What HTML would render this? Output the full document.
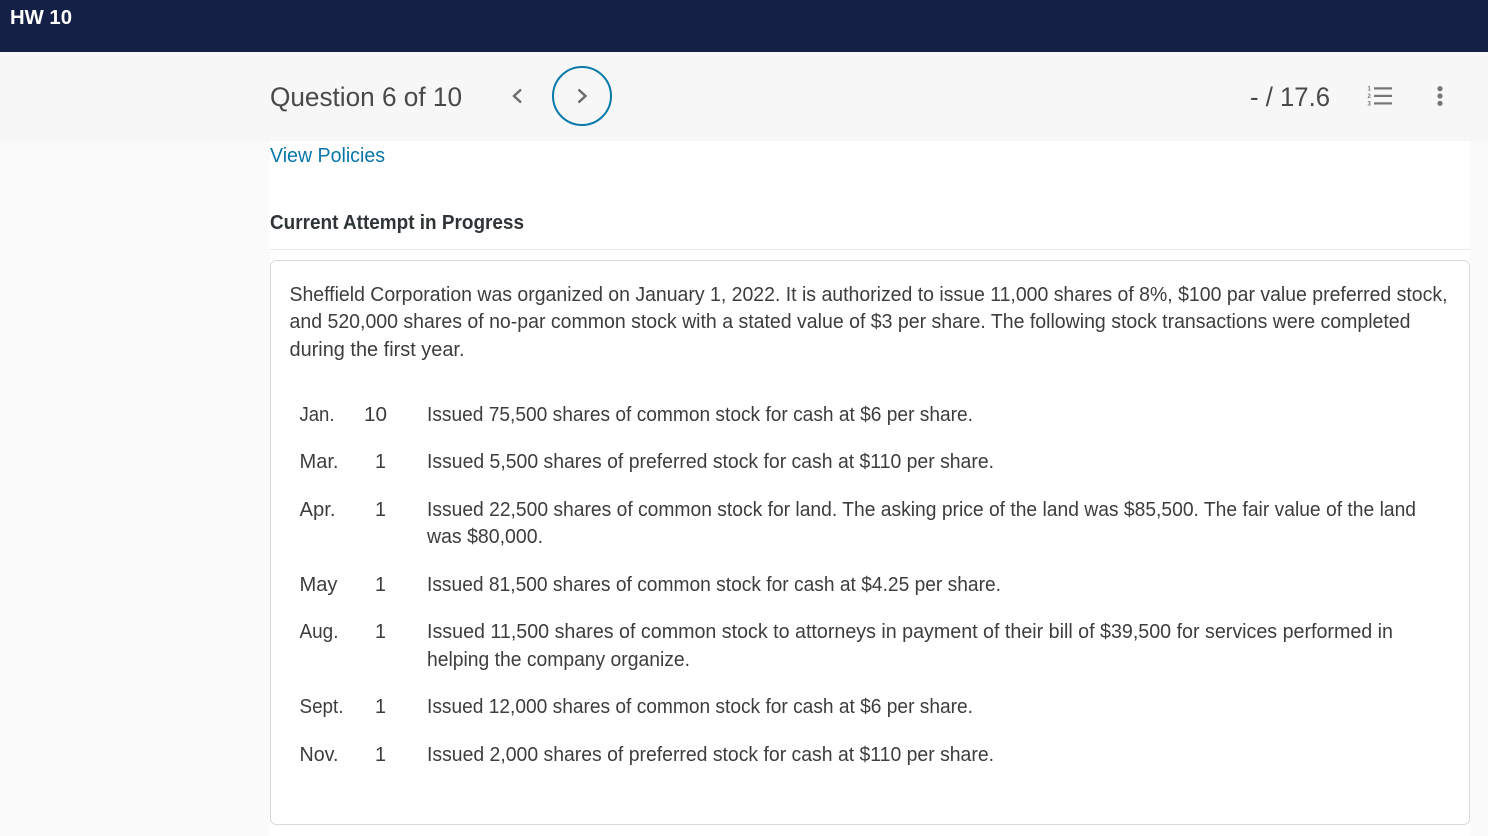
<!DOCTYPE html>
<html><head><meta charset="utf-8"><style>
html,body{margin:0;padding:0;width:1488px;height:836px;overflow:hidden;background:#fafafa}
svg{display:block;position:absolute;left:0;top:0}
text{font-family:"Liberation Sans",Arial,sans-serif;fill:#3d3d3d;font-size:20px}
</style></head><body>
<svg width="1488" height="836" viewBox="0 0 1488 836" xmlns="http://www.w3.org/2000/svg">
<rect width="1488" height="52" fill="#142046"/>
<rect y="52" width="1488" height="89" fill="#f7f7f7"/>
<rect x="270" y="141" width="1200" height="695" fill="#fff"/>
<rect x="270" y="249" width="1200" height="1" fill="#e8e8e8"/>
<rect x="270.5" y="260.5" width="1199" height="564" rx="6" fill="#fff" stroke="#d9d9d9"/>
<text x="10" y="24" textLength="62" lengthAdjust="spacingAndGlyphs" style="fill:#fff;font-size:20px;font-weight:bold">HW 10</text>
<text x="270" y="106" textLength="192" lengthAdjust="spacingAndGlyphs" style="font-size:27px;fill:#494949">Question 6 of 10</text>
<path d="M521 89.500l-7 6.500 7 6.500" fill="none" stroke="#6a6a6a" stroke-width="2.4"/>
<circle cx="582" cy="96" r="29" fill="none" stroke="#0a7aab" stroke-width="2"/>
<path d="M578.500 89.500l7 6.500-7 6.500" fill="none" stroke="#6a6a6a" stroke-width="2.4"/>
<text x="1250" y="106" textLength="80" lengthAdjust="spacingAndGlyphs" style="font-size:27px;fill:#494949">- / 17.6</text>
<g fill="#757575"><rect x="1374" y="87.300" width="18" height="2.200"/><rect x="1374" y="94.800" width="18" height="2.200"/><rect x="1374" y="102.300" width="18" height="2.200"/>
<circle cx="1440" cy="88.700" r="2.600"/><circle cx="1440" cy="96" r="2.600"/><circle cx="1440" cy="103.300" r="2.600"/></g>
<text x="1367.500" y="90.500" style="font-size:6px;font-weight:bold;fill:#757575">1</text>
<text x="1367.500" y="98.200" style="font-size:6px;font-weight:bold;fill:#757575">2</text>
<text x="1367.500" y="105.700" style="font-size:6px;font-weight:bold;fill:#757575">3</text>
<text x="270" y="162" textLength="115" lengthAdjust="spacingAndGlyphs" style="fill:#0a76a8">View Policies</text>
<text x="270" y="229" textLength="254" lengthAdjust="spacingAndGlyphs" style="font-weight:bold;fill:#2f3437">Current Attempt in Progress</text>
<text x="289.500" y="301" textLength="1158" lengthAdjust="spacingAndGlyphs">Sheffield Corporation was organized on January 1, 2022. It is authorized to issue 11,000 shares of 8%, $100 par value preferred stock,</text>
<text x="289.500" y="328" textLength="1121" lengthAdjust="spacingAndGlyphs">and 520,000 shares of no-par common stock with a stated value of $3 per share. The following stock transactions were completed</text>
<text x="289.500" y="356" textLength="175" lengthAdjust="spacingAndGlyphs">during the first year.</text>
<text x="299.500" y="421" textLength="35" lengthAdjust="spacingAndGlyphs">Jan.</text><text x="364" y="421" textLength="23" lengthAdjust="spacingAndGlyphs">10</text>
<text x="427" y="421" textLength="546" lengthAdjust="spacingAndGlyphs">Issued 75,500 shares of common stock for cash at $6 per share.</text>
<text x="299.500" y="468" textLength="39" lengthAdjust="spacingAndGlyphs">Mar.</text><text x="375" y="468" textLength="11" lengthAdjust="spacingAndGlyphs">1</text>
<text x="427" y="468" textLength="567" lengthAdjust="spacingAndGlyphs">Issued 5,500 shares of preferred stock for cash at $110 per share.</text>
<text x="299.500" y="516" textLength="36" lengthAdjust="spacingAndGlyphs">Apr.</text><text x="375" y="516" textLength="11" lengthAdjust="spacingAndGlyphs">1</text>
<text x="427" y="516" textLength="989" lengthAdjust="spacingAndGlyphs">Issued 22,500 shares of common stock for land. The asking price of the land was $85,500. The fair value of the land</text>
<text x="427" y="543" textLength="116" lengthAdjust="spacingAndGlyphs">was $80,000.</text>
<text x="299.500" y="591" textLength="38" lengthAdjust="spacingAndGlyphs">May</text><text x="375" y="591" textLength="11" lengthAdjust="spacingAndGlyphs">1</text>
<text x="427" y="591" textLength="574" lengthAdjust="spacingAndGlyphs">Issued 81,500 shares of common stock for cash at $4.25 per share.</text>
<text x="299.500" y="638" textLength="39" lengthAdjust="spacingAndGlyphs">Aug.</text><text x="375" y="638" textLength="11" lengthAdjust="spacingAndGlyphs">1</text>
<text x="427" y="638" textLength="966" lengthAdjust="spacingAndGlyphs">Issued 11,500 shares of common stock to attorneys in payment of their bill of $39,500 for services performed in</text>
<text x="427" y="666" textLength="263" lengthAdjust="spacingAndGlyphs">helping the company organize.</text>
<text x="299.500" y="713" textLength="44" lengthAdjust="spacingAndGlyphs">Sept.</text><text x="375" y="713" textLength="11" lengthAdjust="spacingAndGlyphs">1</text>
<text x="427" y="713" textLength="546" lengthAdjust="spacingAndGlyphs">Issued 12,000 shares of common stock for cash at $6 per share.</text>
<text x="299.500" y="761" textLength="39" lengthAdjust="spacingAndGlyphs">Nov.</text><text x="375" y="761" textLength="11" lengthAdjust="spacingAndGlyphs">1</text>
<text x="427" y="761" textLength="567" lengthAdjust="spacingAndGlyphs">Issued 2,000 shares of preferred stock for cash at $110 per share.</text>
</svg>
</body></html>
